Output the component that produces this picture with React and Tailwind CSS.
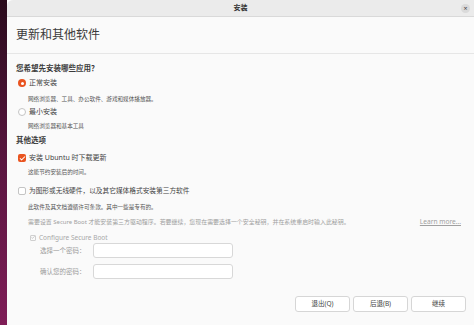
import { Check } from "lucide-react";

const font = { fontFamily: '"Noto Sans", "Noto Sans CJK SC", sans-serif' };

function Radio({ on }) {
  return on ? (
    <span className="w-[8px] h-[8px] rounded-full bg-[#e95420] flex items-center justify-center shrink-0">
      <span className="w-[3px] h-[3px] rounded-full bg-white" />
    </span>
  ) : (
    <span className="w-[8px] h-[8px] rounded-full border border-[#c4c4c4] bg-white shrink-0" />
  );
}

function Box({ on }) {
  return on ? (
    <span className="w-[8px] h-[8px] rounded-[2px] bg-[#e95420] flex items-center justify-center shrink-0">
      <Check size={7} strokeWidth={3.5} color="#fff" />
    </span>
  ) : (
    <span className="w-[8px] h-[8px] rounded-[2px] border border-[#c4c4c4] bg-white shrink-0" />
  );
}

export default function App() {
  return (
    <div className="w-[474px] h-[325px] flex overflow-hidden" style={font}>
      {/* desktop edge */}
      <div className="w-[7px] h-full bg-gradient-to-b from-[#2a0b1c] via-[#5a1640] to-[#7f1d57]" />

      {/* window */}
      <div className="flex-1 h-full flex flex-col bg-[#fafafa] rounded-tl-[6px] overflow-hidden">
        {/* title bar */}
        <div className="h-[17px] shrink-0 bg-[#ebebeb] border-b border-[#d9d9d9] relative flex items-center justify-center">
          <span className="text-[7px] text-[#333] font-semibold">安装</span>
          <span className="absolute right-[4px] top-[4px] w-[9px] h-[9px] rounded-full bg-[#dadada] flex items-center justify-center text-[7px] leading-none text-[#444]">
            ×
          </span>
        </div>

        {/* heading */}
        <div className="h-[37px] shrink-0 flex items-center pl-[9px] border-b border-[#e6e6e6]">
          <span className="text-[12px] text-[#3a3a3a]">更新和其他软件</span>
        </div>

        {/* body */}
        <div className="flex-1 flex flex-col pl-[9px] pr-[13px] text-[#444]">
          <div className="mt-[9px] h-[12px] flex items-center text-[7.5px] font-bold text-[#3a3a3a]">
            您希望先安装哪些应用？
          </div>

          <div className="mt-[2px] h-[12px] flex items-center gap-[3px] pl-[2px] text-[7px]">
            <Radio on />
            <span>正常安装</span>
          </div>
          <div className="mt-[4px] h-[12px] flex items-center pl-[12px] text-[5.6px] text-[#555]">
            网络浏览器、工具、办公软件、游戏和媒体播放器。
          </div>

          <div className="mt-[1px] h-[12px] flex items-center gap-[3px] pl-[2px] text-[7px]">
            <Radio />
            <span>最小安装</span>
          </div>
          <div className="mt-[2px] h-[12px] flex items-center pl-[12px] text-[5.6px] text-[#555]">
            网络浏览器和基本工具
          </div>

          <div className="mt-[3px] h-[12px] flex items-center text-[7.5px] font-bold text-[#3a3a3a]">
            其他选项
          </div>

          <div className="mt-[5px] h-[12px] flex items-center gap-[3px] pl-[2px] text-[7px]">
            <Box on />
            <span>安装 Ubuntu 时下载更新</span>
          </div>
          <div className="mt-[2px] h-[12px] flex items-center pl-[12px] text-[5.6px] text-[#555]">
            这能节约安装后的时间。
          </div>

          <div className="mt-[7px] h-[12px] flex items-center gap-[3px] pl-[2px] text-[6.7px]">
            <Box />
            <span>为图形或无线硬件，以及其它媒体格式安装第三方软件</span>
          </div>
          <div className="mt-[4px] h-[12px] flex items-center pl-[12px] text-[5.6px] text-[#555]">
            此软件及其文档遵循许可条款。其中一些是专有的。
          </div>

          <div className="mt-[3px] h-[12px] flex items-center justify-between pl-[12px] text-[#a0a0a0]">
            <span className="text-[5.95px]">需要设置 Secure Boot 才能安装第三方驱动程序。若要继续，您现在需要选择一个安全秘钥，并在系统重启时输入此秘钥。</span>
            <span className="text-[6.6px] underline">Learn more...</span>
          </div>

          <div className="mt-[4px] h-[11px] flex items-center gap-[3px] pl-[14px] text-[6.5px] text-[#a8a8a8]">
            <span className="w-[6px] h-[6px] rounded-[1px] border border-[#cfcfcf] flex items-center justify-center">
              <Check size={5} strokeWidth={3} color="#999" />
            </span>
            <span>Configure Secure Boot</span>
          </div>

          <div className="h-[15px] flex items-center pl-[24px] text-[6.5px] text-[#9a9a9a]">
            <span className="w-[53px]">选择一个密码：</span>
            <span className="w-[140px] h-[15px] bg-white border border-[#d8d8d8] rounded-[3px]" />
          </div>
          <div className="mt-[6px] h-[15px] flex items-center pl-[24px] text-[6.5px] text-[#9a9a9a]">
            <span className="w-[53px]">确认您的密码：</span>
            <span className="w-[140px] h-[15px] bg-white border border-[#d8d8d8] rounded-[3px]" />
          </div>

          {/* buttons */}
          <div className="mt-auto mb-[13px] flex justify-end gap-[3px] mr-[-5px]">
            {["退出(Q)", "后退(B)", "继续"].map((t) => (
              <button
                key={t}
                className="w-[55px] h-[16px] bg-white border border-[#d6d6d6] rounded-[3px] text-[6.5px] text-[#444] flex items-center justify-center"
              >
                {t}
              </button>
            ))}
          </div>
        </div>
      </div>
    </div>
  );
}
